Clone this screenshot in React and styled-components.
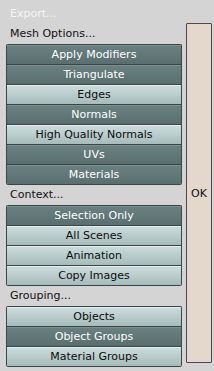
import styled, { createGlobalStyle } from 'styled-components';

const GlobalStyle = createGlobalStyle`
    html, body {
        margin: 0;
        padding: 0;
        background: #d4d4d4;
    }
    body {
        font-family: "DejaVu Sans", "Liberation Sans", sans-serif;
        font-size: 11px;
    }
`;

const groups = [
    {
        label: 'Mesh Options...',
        items: [
            ['Apply Modifiers', true],
            ['Triangulate', true],
            ['Edges', false],
            ['Normals', true],
            ['High Quality Normals', false],
            ['UVs', true],
            ['Materials', true],
        ],
    },
    {
        label: 'Context...',
        items: [
            ['Selection Only', true],
            ['All Scenes', false],
            ['Animation', false],
            ['Copy Images', false],
        ],
    },
    {
        label: 'Grouping...',
        items: [
            ['Objects', false],
            ['Object Groups', true],
            ['Material Groups', false],
        ],
    },
];

export default function App() {
    return (
        <>
            <GlobalStyle />
            <Panel>
                <Column>
                    <Label dim>Export...</Label>
                    {groups.map((g) => (
                        <div key={g.label}>
                            <Label>{g.label}</Label>
                            <Group>
                                {g.items.map(([name, on]) => (
                                    <Toggle key={name} on={on ? 1 : 0}>
                                        {name}
                                    </Toggle>
                                ))}
                            </Group>
                        </div>
                    ))}
                </Column>
                <OkButton>OK</OkButton>
            </Panel>
        </>
    );
}

const Panel = styled.div`
    width: 214px;
    height: 371px;
    box-sizing: border-box;
    padding: 4px 2px 0 6px;
    display: flex;
    gap: 4px;
`;
const Column = styled.div`
    width: 176px;
    display: flex;
    flex-direction: column;
`;
const Label = styled.div`
    height: 20px;
    line-height: 20px;
    padding-left: 4px;
    color: ${(p) => (p.dim ? '#f4f4f4' : '#111')};
    white-space: nowrap;
`;
const Group = styled.div`
    border: 1px solid #3a4646;
    border-bottom: none;
    border-radius: 2px;
    overflow: hidden;
`;
const Toggle = styled.div`
    height: 20px;
    box-sizing: border-box;
    border-bottom: 1px solid #3a4646;
    text-align: center;
    line-height: 19px;
    white-space: nowrap;
    color: ${(p) => (p.on ? '#fff' : '#0c0c0c')};
    background: ${(p) =>
        p.on
            ? 'linear-gradient(#6b8181, #5a6e6e)'
            : 'linear-gradient(#cddddd, #a7bbbb)'};
    box-shadow: inset 0 1px 0
        ${(p) => (p.on ? 'rgba(255,255,255,0.12)' : 'rgba(255,255,255,0.5)')};
`;
const OkButton = styled.div`
    margin-top: 19px;
    width: 26px;
    height: 340px;
    box-sizing: border-box;
    border: 1px solid #4a4a4a;
    border-radius: 1px;
    background: #e4d7cb;
    color: #111;
    display: flex;
    align-items: center;
    justify-content: center;
`;
